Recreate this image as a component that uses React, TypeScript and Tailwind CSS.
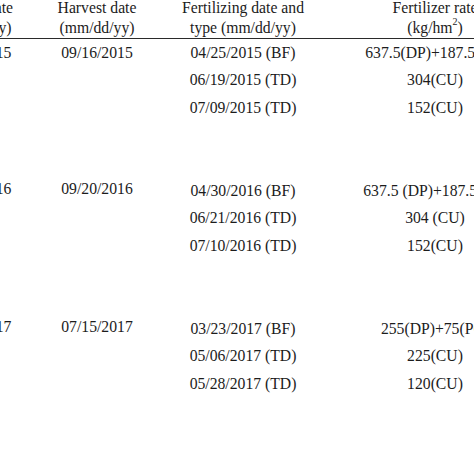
const groups = [
  {
    sow: "04/20/2015",
    harvest: "09/16/2015",
    fert: ["04/25/2015 (BF)", "06/19/2015 (TD)", "07/09/2015 (TD)"],
    rate: ["637.5(DP)+187.5(PC)", "304(CU)", "152(CU)"],
    lift: false,
  },
  {
    sow: "04/26/2016",
    harvest: "09/20/2016",
    fert: ["04/30/2016 (BF)", "06/21/2016 (TD)", "07/10/2016 (TD)"],
    rate: ["637.5 (DP)+187.5(PC)", "304 (CU)", "152(CU)"],
    lift: true,
  },
  {
    sow: "03/20/2017",
    harvest: "07/15/2017",
    fert: ["03/23/2017 (BF)", "05/06/2017 (TD)", "05/28/2017 (TD)"],
    rate: ["255(DP)+75(PC)", "225(CU)", "120(CU)"],
    lift: true,
  },
];

const cols = "grid grid-cols-[100px_146px_146px_238px]";

export default function App() {
  return (
    <div className="h-[474px] w-[474px] overflow-hidden bg-white font-['Liberation_Serif','Times_New_Roman',serif] text-[15.7px] text-[#1c1c1c]">
      <div className="-ml-[76px] w-[630px]">
        {/* header */}
        <div className={`${cols} -mt-[2.3px] border-b border-[#2a2a2a] text-center leading-[20px]`}>
          <div>
            Sowing date
            <br />
            (mm/dd/yy)
          </div>
          <div>
            Harvest date
            <br />
            (mm/dd/yy)
          </div>
          <div>
            Fertilizing date and
            <br />
            type (mm/dd/yy)
          </div>
          <div>
            Fertilizer rate
            <br />
            (kg/hm<sup className="relative -top-[1px] align-super text-[10px] leading-none">2</sup>)
          </div>
        </div>

        {/* body */}
        {groups.map((g) => (
          <div key={g.harvest} className={`${cols} h-[138px] text-center leading-[27.6px]`}>
            <div className={g.lift ? "-mt-[2px] pl-[3.4px]" : "pl-[3.4px]"}>{g.sow}</div>
            <div className={g.lift ? "-mt-[2px]" : ""}>{g.harvest}</div>
            <div className="flex flex-col">
              {g.fert.map((f) => (
                <span key={f}>{f}</span>
              ))}
            </div>
            <div className="flex flex-col">
              {g.rate.map((r) => (
                <span key={r}>{r}</span>
              ))}
            </div>
          </div>
        ))}
      </div>
    </div>
  );
}
